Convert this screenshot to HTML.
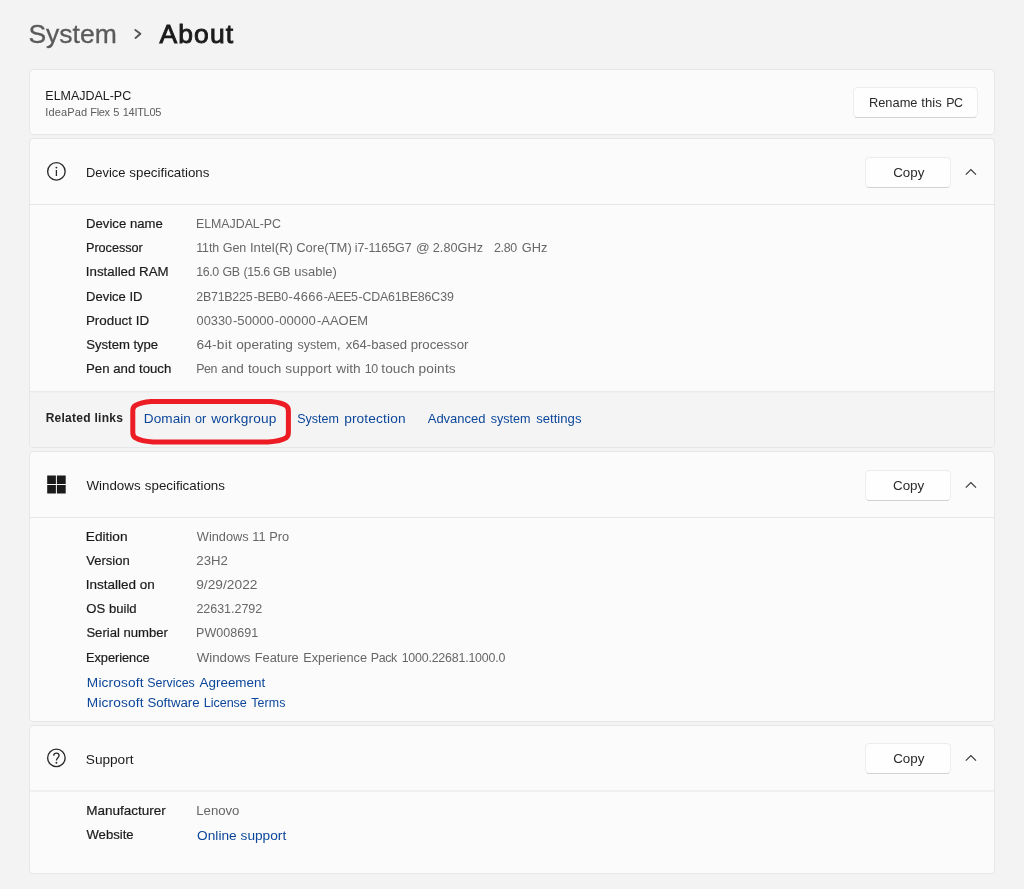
<!DOCTYPE html>
<html lang="en">
<head>
<meta charset="utf-8">
<title>System &gt; About</title>
<style>
html,body{margin:0;padding:0;}
body{width:1024px;height:889px;overflow:hidden;background:#f3f3f3;font-family:"Liberation Sans",sans-serif;}
#page{position:relative;display:block;width:1024px;height:889px;overflow:hidden;will-change:transform;}
.crumb{position:absolute;left:0;top:0;width:1024px;height:69px;margin:0;font-weight:normal;font-size:26.5px;}
.card{position:absolute;display:block;left:29px;width:966px;box-sizing:border-box;background:#fbfbfb;border:1px solid #e6e6e6;border-radius:4px;}
.hr{position:absolute;width:964px;height:1px;background:#e6e6e6;}
.rel{position:absolute;width:964px;background:#f4f4f4;border-radius:0 0 3px 3px;}
.btn{position:absolute;box-sizing:border-box;margin:0;padding:0;font:inherit;background:#fefefe;border:1px solid #ececec;border-bottom-color:#d2d2d2;border-radius:4.5px;}
.x{position:absolute;white-space:pre;line-height:20px;transform-origin:0 0;}
.lk{text-decoration:none;color:#0b469a;}
.sb{-webkit-text-stroke:0.9px #1b1b1b;}
.sb2{font-weight:bold;}
.dk{-webkit-text-stroke:0.2px #1b1b1b;}
.sb0{-webkit-text-stroke:0.3px #5a5a5a;}
svg{position:absolute;overflow:visible;}
</style>
</head>
<body>
<main id="page">
<h1 class="crumb"><span id="t_sys" class="x sb0" style="left:28.38px;top:24px;font-size:26.50px;color:#5a5a5a;letter-spacing:0.013px">System</span><svg id="i_chev" style="left:132px;top:28px" width="12" height="14" viewBox="0 0 12 14"><path d="M3.3 1.9 L8.4 5.75 L3.5 10" fill="none" stroke="#555" stroke-width="1.9" stroke-linecap="round" stroke-linejoin="round"/></svg><span id="t_abt" class="x sb" style="left:159.45px;top:24px;font-size:26.50px;color:#1b1b1b;letter-spacing:1.136px">About</span></h1>
<section class="card" style="top:69px;height:66px;">
<span id="t_pc" class="x" style="left:15.35px;top:16px;font-size:12.47px;color:#1b1b1b;letter-spacing:-0.008px">ELMAJDAL-PC</span>
<span id="t_model_0" class="x" style="left:15.17px;top:32px;font-size:11.00px;color:#5c5c5c;letter-spacing:0.163px">IdeaPad </span><span id="t_model_1" class="x" style="left:60.27px;top:32px;font-size:11.00px;color:#5c5c5c;letter-spacing:-0.337px">Flex </span><span id="t_model_2" class="x" style="left:83.27px;top:32px;font-size:11.00px;color:#5c5c5c;letter-spacing:0.000px">5 </span><span id="t_model_3" class="x" style="left:92.78px;top:32px;font-size:11.00px;color:#5c5c5c;letter-spacing:-0.289px">14ITL05</span>
<button class="btn" type="button" style="left:823px;top:17px;width:125px;height:31px;"><span id="t_ren_0" class="x" style="left:14.92px;top:5px;font-size:12.84px;color:#2a2a2a;letter-spacing:0.015px">Rename </span><span id="t_ren_1" class="x" style="left:67.31px;top:5px;font-size:13.12px;color:#2a2a2a;letter-spacing:0.047px">this </span><span id="t_ren_2" class="x" style="left:92.21px;top:5px;font-size:12.40px;color:#2a2a2a;letter-spacing:-0.400px">PC</span></button>
</section>
<section class="card" style="top:138px;height:310px;">
<svg id="i_info" style="left:16px;top:22px" width="21" height="21" viewBox="0 0 21 21"><circle cx="10.4" cy="10.4" r="8.75" fill="none" stroke="#2a2a2a" stroke-width="1.35"/><circle cx="10.4" cy="6.6" r="0.95" fill="#2a2a2a"/><path d="M10.4 9 V15" stroke="#2a2a2a" stroke-width="1.3"/></svg>
<span id="t_dev_0" class="x" style="left:56.07px;top:24px;font-size:12.90px;color:#1b1b1b;letter-spacing:-0.002px">Device </span><span id="t_dev_1" class="x" style="left:99.29px;top:24px;font-size:13.35px;color:#1b1b1b;letter-spacing:0.006px">specifications</span>
<button class="btn" type="button" style="left:835px;top:18px;width:86px;height:31px;"><span id="t_cp1" class="x" style="left:27.17px;top:5px;font-size:13.37px;color:#2a2a2a;letter-spacing:0.009px">Copy</span></button>
<svg class="up" style="left:935px;top:29px" width="12" height="8" viewBox="0 0 12 8"><path d="M0.8 6.6 L5.9 1.5 L11 6.6" fill="none" stroke="#3a3a3a" stroke-width="1.2"/></svg>
<div class="hr" style="left:0px;top:65px;"></div>
<span id="l_d1" class="x dk" style="left:55.99px;top:75px;font-size:13.11px;color:#1b1b1b;letter-spacing:0.037px">Device name</span>
<span id="v_d1" class="x" style="left:165.98px;top:75px;font-size:12.40px;color:#676767;letter-spacing:-0.035px">ELMAJDAL-PC</span>
<span id="l_d2" class="x dk" style="left:55.96px;top:99px;font-size:12.68px;color:#1b1b1b;letter-spacing:-0.025px">Processor</span>
<span id="v_d2_0" class="x" style="left:166.20px;top:99px;font-size:12.40px;color:#676767;letter-spacing:-0.046px">11th </span><span id="v_d2_1" class="x" style="left:192.83px;top:99px;font-size:12.49px;color:#676767;letter-spacing:-0.094px">Gen </span><span id="v_d2_2" class="x" style="left:219.97px;top:99px;font-size:13.05px;color:#676767;letter-spacing:0.030px">Intel(R) </span><span id="v_d2_3" class="x" style="left:266.19px;top:99px;font-size:13.01px;color:#676767;letter-spacing:-0.003px">Core(TM) </span><span id="v_d2_4" class="x" style="left:324.78px;top:99px;font-size:12.40px;color:#676767;letter-spacing:-0.021px">i7-1165G7 </span><span id="v_d2_5" class="x" style="left:386.02px;top:99px;font-size:13.50px;color:#676767;letter-spacing:0.000px">@ </span><span id="v_d2_6" class="x" style="left:402.79px;top:99px;font-size:12.66px;color:#676767;letter-spacing:0.048px">2.80GHz   </span><span id="v_d2_7" class="x" style="left:464.10px;top:99px;font-size:12.40px;color:#676767;letter-spacing:-0.370px">2.80 </span><span id="v_d2_8" class="x" style="left:491.78px;top:99px;font-size:12.80px;color:#676767;letter-spacing:0.022px">GHz</span>
<span id="l_d3" class="x dk" style="left:55.87px;top:123px;font-size:13.29px;color:#1b1b1b;letter-spacing:0.007px">Installed RAM</span>
<span id="v_d3_0" class="x" style="left:166.20px;top:123px;font-size:12.40px;color:#676767;letter-spacing:-0.400px">16.0 </span><span id="v_d3_1" class="x" style="left:192.62px;top:123px;font-size:12.40px;color:#676767;letter-spacing:-0.400px">GB </span><span id="v_d3_2" class="x" style="left:213.46px;top:123px;font-size:12.40px;color:#676767;letter-spacing:-0.400px">(15.6 </span><span id="v_d3_3" class="x" style="left:243.08px;top:123px;font-size:12.40px;color:#676767;letter-spacing:-0.400px">GB </span><span id="v_d3_4" class="x" style="left:264.27px;top:123px;font-size:12.96px;color:#676767;letter-spacing:0.015px">usable)</span>
<span id="l_d4" class="x dk" style="left:56.07px;top:148px;font-size:13.03px;color:#1b1b1b;letter-spacing:-0.005px">Device ID</span>
<span id="v_d4_0" class="x" style="left:166.31px;top:148px;font-size:12.40px;color:#676767;letter-spacing:-0.227px">2B71B225</span><span id="v_d4_1" class="x" style="left:223.84px;top:148px;font-size:12.40px;color:#676767;letter-spacing:-0.400px">-BEB0</span><span id="v_d4_2" class="x" style="left:258.57px;top:148px;font-size:12.90px;color:#676767;letter-spacing:0.350px">-4666</span><span id="v_d4_3" class="x" style="left:293.71px;top:148px;font-size:12.40px;color:#676767;letter-spacing:-0.400px">-AEE5</span><span id="v_d4_4" class="x" style="left:328.43px;top:148px;font-size:12.40px;color:#676767;letter-spacing:-0.146px">-CDA61BE86C39</span>
<span id="l_d5" class="x dk" style="left:55.89px;top:172px;font-size:13.37px;color:#1b1b1b;letter-spacing:0.011px">Product ID</span>
<span id="v_d5_0" class="x" style="left:166.58px;top:172px;font-size:12.76px;color:#676767;letter-spacing:0.034px">00330</span><span id="v_d5_1" class="x" style="left:203.03px;top:172px;font-size:13.15px;color:#676767;letter-spacing:-0.025px">-50000</span><span id="v_d5_2" class="x" style="left:244.87px;top:172px;font-size:13.13px;color:#676767;letter-spacing:0.000px">-00000</span><span id="v_d5_3" class="x" style="left:286.92px;top:172px;font-size:12.94px;color:#676767;letter-spacing:0.027px">-AAOEM</span>
<span id="l_d6" class="x dk" style="left:56.24px;top:196px;font-size:13.11px;color:#1b1b1b;letter-spacing:-0.023px">System type</span>
<span id="v_d6_0" class="x" style="left:166.43px;top:196px;font-size:13.70px;color:#676767;letter-spacing:0.212px">64-bit </span><span id="v_d6_1" class="x" style="left:206.30px;top:196px;font-size:13.68px;color:#676767;letter-spacing:-0.054px">operating </span><span id="v_d6_2" class="x" style="left:267.42px;top:196px;font-size:12.51px;color:#676767;letter-spacing:0.007px">system, </span><span id="v_d6_3" class="x" style="left:315.65px;top:196px;font-size:13.14px;color:#676767;letter-spacing:0.009px">x64-based </span><span id="v_d6_4" class="x" style="left:380.63px;top:196px;font-size:13.24px;color:#676767;letter-spacing:-0.041px">processor</span>
<span id="l_d7" class="x dk" style="left:55.99px;top:220px;font-size:13.21px;color:#1b1b1b;letter-spacing:0.016px">Pen and touch</span>
<span id="v_d7_0" class="x" style="left:166.18px;top:220px;font-size:12.40px;color:#676767;letter-spacing:-0.400px">Pen </span><span id="v_d7_1" class="x" style="left:191.15px;top:220px;font-size:13.57px;color:#676767;letter-spacing:0.010px">and </span><span id="v_d7_2" class="x" style="left:217.94px;top:220px;font-size:13.58px;color:#676767;letter-spacing:0.029px">touch </span><span id="v_d7_3" class="x" style="left:255.31px;top:220px;font-size:13.70px;color:#676767;letter-spacing:0.118px">support </span><span id="v_d7_4" class="x" style="left:306.24px;top:220px;font-size:13.69px;color:#676767;letter-spacing:0.054px">with </span><span id="v_d7_5" class="x" style="left:334.71px;top:220px;font-size:12.40px;color:#676767;letter-spacing:-0.400px">10 </span><span id="v_d7_6" class="x" style="left:351.36px;top:220px;font-size:13.66px;color:#676767;letter-spacing:0.015px">touch </span><span id="v_d7_7" class="x" style="left:388.40px;top:220px;font-size:13.70px;color:#676767;letter-spacing:0.156px">points</span>
<div class="rel" style="left:0;top:252px;height:56px;"></div>
<div class="hr" style="left:0px;top:252px;background:#eaeaea;"></div><div class="hr" style="left:0px;top:253px;background:#f0f0f0;"></div>
<span id="t_rel" class="x sb2" style="left:15.67px;top:269px;font-size:12.00px;color:#242424;letter-spacing:0.263px">Related links</span>
<a class="lk" href="#domain"><span id="k_r1_0" class="x" style="left:113.84px;top:270px;font-size:13.58px;color:#0b469a;letter-spacing:0.054px">Domain </span><span id="k_r1_1" class="x" style="left:164.98px;top:270px;font-size:12.64px;color:#0b469a;letter-spacing:-0.024px">or </span><span id="k_r1_2" class="x" style="left:181.24px;top:270px;font-size:13.70px;color:#0b469a;letter-spacing:0.159px">workgroup</span></a>
<a class="lk" href="#protection"><span id="k_r2_0" class="x" style="left:267.28px;top:270px;font-size:12.50px;color:#0b469a;letter-spacing:-0.005px">System </span><span id="k_r2_1" class="x" style="left:314.17px;top:270px;font-size:13.70px;color:#0b469a;letter-spacing:0.141px">protection</span></a>
<a class="lk" href="#advanced"><span id="k_r3_0" class="x" style="left:397.77px;top:270px;font-size:13.00px;color:#0b469a;letter-spacing:-0.023px">Advanced </span><span id="k_r3_1" class="x" style="left:460.70px;top:270px;font-size:12.59px;color:#0b469a;letter-spacing:-0.017px">system </span><span id="k_r3_2" class="x" style="left:506.18px;top:270px;font-size:13.11px;color:#0b469a;letter-spacing:0.015px">settings</span></a>
</section>
<section class="card" style="top:451px;height:271px;">
<svg id="i_win" style="left:17px;top:23px" width="19" height="19" viewBox="0 0 19 19"><path d="M0.2 0.4h8.7v8.5H0.2zM9.9 0.4h8.8v8.5H9.9zM0.2 9.9h8.7v8.6H0.2zM9.9 9.9h8.8v8.6H9.9z" fill="#1b1b1b"/></svg>
<span id="t_win_0" class="x" style="left:56.54px;top:24px;font-size:13.33px;color:#1b1b1b;letter-spacing:-0.008px">Windows </span><span id="t_win_1" class="x" style="left:114.82px;top:24px;font-size:13.35px;color:#1b1b1b;letter-spacing:-0.002px">specifications</span>
<button class="btn" type="button" style="left:835px;top:18px;width:86px;height:31px;"><span id="t_cp2" class="x" style="left:27.12px;top:5px;font-size:13.40px;color:#2a2a2a;letter-spacing:-0.067px">Copy</span></button>
<svg class="up" style="left:935px;top:29px" width="12" height="8" viewBox="0 0 12 8"><path d="M0.8 6.6 L5.9 1.5 L11 6.6" fill="none" stroke="#3a3a3a" stroke-width="1.2"/></svg>
<div class="hr" style="left:0px;top:65px;"></div>
<span id="l_w1" class="x dk" style="left:55.85px;top:75px;font-size:13.68px;color:#1b1b1b;letter-spacing:-0.014px">Edition</span>
<span id="v_w1" class="x" style="left:166.83px;top:75px;font-size:12.79px;color:#676767;letter-spacing:0.008px">Windows 11 Pro</span>
<span id="l_w2" class="x dk" style="left:56.36px;top:99px;font-size:13.04px;color:#1b1b1b;letter-spacing:-0.024px">Version</span>
<span id="v_w2" class="x" style="left:166.37px;top:99px;font-size:13.21px;color:#676767;letter-spacing:-0.005px">23H2</span>
<span id="l_w3" class="x dk" style="left:55.74px;top:123px;font-size:13.51px;color:#1b1b1b;letter-spacing:0.006px">Installed on</span>
<span id="v_w3" class="x" style="left:166.23px;top:123px;font-size:13.70px;color:#676767;letter-spacing:0.036px">9/29/2022</span>
<span id="l_w4" class="x dk" style="left:56.36px;top:147px;font-size:13.10px;color:#1b1b1b;letter-spacing:0.002px">OS build</span>
<span id="v_w4" class="x" style="left:166.40px;top:147px;font-size:12.49px;color:#676767;letter-spacing:-0.015px">22631.2792</span>
<span id="l_w5" class="x dk" style="left:56.39px;top:171px;font-size:13.12px;color:#1b1b1b;letter-spacing:-0.006px">Serial number</span>
<span id="v_w5" class="x" style="left:166.03px;top:171px;font-size:12.51px;color:#676767;letter-spacing:0.038px">PW008691</span>
<span id="l_w6" class="x dk" style="left:55.95px;top:196px;font-size:12.79px;color:#1b1b1b;letter-spacing:-0.023px">Experience</span>
<span id="v_w6_0" class="x" style="left:166.85px;top:196px;font-size:13.33px;color:#676767;letter-spacing:-0.065px">Windows </span><span id="v_w6_1" class="x" style="left:224.72px;top:196px;font-size:12.92px;color:#676767;letter-spacing:-0.067px">Feature </span><span id="v_w6_2" class="x" style="left:273.20px;top:196px;font-size:12.74px;color:#676767;letter-spacing:0.014px">Experience </span><span id="v_w6_3" class="x" style="left:340.86px;top:196px;font-size:12.40px;color:#676767;letter-spacing:-0.400px">Pack </span><span id="v_w6_4" class="x" style="left:371.63px;top:196px;font-size:12.40px;color:#676767;letter-spacing:-0.194px">1000.22681.1000.0</span>
<a class="lk" href="#services-agreement"><span id="k_w1_0" class="x" style="left:56.87px;top:221px;font-size:13.70px;color:#0b469a;letter-spacing:0.143px">Microsoft </span><span id="k_w1_1" class="x" style="left:117.26px;top:221px;font-size:12.44px;color:#0b469a;letter-spacing:-0.026px">Services </span><span id="k_w1_2" class="x" style="left:169.60px;top:221px;font-size:13.43px;color:#0b469a;letter-spacing:-0.011px">Agreement</span></a>
<a class="lk" href="#license-terms"><span id="k_w2_0" class="x" style="left:56.87px;top:241px;font-size:13.70px;color:#0b469a;letter-spacing:0.143px">Microsoft </span><span id="k_w2_1" class="x" style="left:117.39px;top:241px;font-size:13.23px;color:#0b469a;letter-spacing:0.003px">Software </span><span id="k_w2_2" class="x" style="left:173.76px;top:241px;font-size:12.59px;color:#0b469a;letter-spacing:-0.041px">License </span><span id="k_w2_3" class="x" style="left:221.36px;top:241px;font-size:12.41px;color:#0b469a;letter-spacing:0.051px">Terms</span></a>
</section>
<section class="card" style="top:725px;height:149px;">
<svg id="i_help" style="left:16px;top:22px" width="21" height="21" viewBox="0 0 21 21"><circle cx="10.4" cy="9.9" r="8.75" fill="none" stroke="#2a2a2a" stroke-width="1.35"/><path d="M7.7 7.8 C7.7 6.1 8.8 5.1 10.4 5.1 C12 5.1 13.1 6.1 13.1 7.5 C13.1 9.6 10.4 9.9 10.4 12.6" fill="none" stroke="#2a2a2a" stroke-width="1.3"/><circle cx="10.4" cy="14.8" r="0.95" fill="#2a2a2a"/></svg>
<span id="t_sup" class="x" style="left:55.80px;top:24px;font-size:13.67px;color:#1b1b1b;letter-spacing:-0.029px">Support</span>
<button class="btn" type="button" style="left:835px;top:17px;width:86px;height:31px;"><span id="t_cp3" class="x" style="left:27.17px;top:5px;font-size:13.37px;color:#2a2a2a;letter-spacing:0.009px">Copy</span></button>
<svg class="up" style="left:935px;top:28px" width="12" height="8" viewBox="0 0 12 8"><path d="M0.8 6.6 L5.9 1.5 L11 6.6" fill="none" stroke="#3a3a3a" stroke-width="1.2"/></svg>
<div class="hr" style="left:0px;top:64px;height:2px;background:#f0f0f0;"></div>
<span id="l_s1" class="x dk" style="left:56.26px;top:75px;font-size:13.54px;color:#1b1b1b;letter-spacing:-0.021px">Manufacturer</span>
<span id="v_s1" class="x" style="left:166.26px;top:75px;font-size:13.21px;color:#676767;letter-spacing:-0.020px">Lenovo</span>
<span id="l_s2" class="x dk" style="left:56.42px;top:99px;font-size:13.12px;color:#1b1b1b;letter-spacing:0.022px">Website</span>
<a class="lk" href="#online-support"><span id="k_s1" class="x" style="left:167.09px;top:100px;font-size:13.69px;color:#0b469a;letter-spacing:0.011px">Online support</span></a>
</section>
<svg id="i_red" style="left:0;top:0" width="1024" height="889" viewBox="0 0 1024 889"><path d="M151 401.4 L271 401.4 C279 402.2 284 404 286 405.6 C288 407 288.4 408.5 288.4 411 L288.4 432.5 C288.4 435 288 436.5 286 437.8 C283 439.8 277 441.3 268 441.9 L153 441.9 C144 441.3 139 439.8 135.5 437.8 C133.2 436.5 132.8 435 132.8 432.5 L132.8 410.5 C132.8 408 133.2 406.8 135.5 405.4 C139 403.4 144 402 151 401.4 Z" fill="none" stroke="#ed1c24" stroke-width="5" stroke-linejoin="round"/></svg>
</main>
</body>
</html>
